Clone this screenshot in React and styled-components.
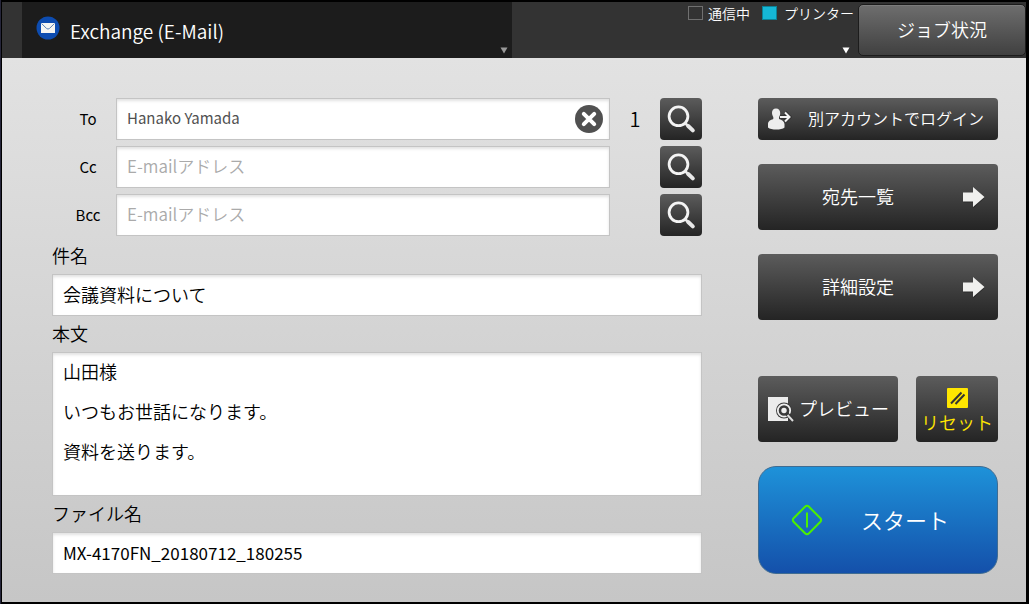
import React from "react";
import styled, { createGlobalStyle } from "styled-components";

const GlobalStyle = createGlobalStyle`
  *, *::before, *::after { box-sizing: border-box; }
  html, body, #root { height: 100%; }
  body {
    margin: 0;
    background: #000;
    font-family: "Noto Sans CJK JP", "Noto Sans", sans-serif;
    font-size: 18px;
    font-weight: 350;
    color: #000;
  }
  button, input, textarea { font: inherit; }
`;

const Screen = styled.div`
  min-height: 100%;
  display: flex;
  flex-direction: column;
  padding: 2px 3px 2px 1px;
  background: #000;
  border-left: 1px solid #25253a;
`;

const Header = styled.header`
  display: flex;
  height: 56px;
  padding-left: 20px;
  background: #333;
`;

const TitleTab = styled.button`
  flex: 0 1 490px;
  display: flex;
  align-items: center;
  gap: 10px;
  padding: 0 4px 0 14px;
  border: 0;
  background: #1c1c1c;
  color: #fff;
  font-size: 19px;
  line-height: 28px;
  text-align: left;
  cursor: pointer;
`;

const TitleText = styled.span`
  flex: 1;
  padding-top: 2px;
`;

const BrandIcon = styled.svg`
  width: 24px;
  height: 24px;
  margin-bottom: 4px;
`;

const Caret = styled.svg`
  width: 8px;
  height: 7px;
  align-self: flex-end;
  margin-bottom: 4px;
  fill: ${(p) => p.$color};
`;

const Status = styled.div`
  flex: 1;
  display: flex;
  flex-direction: column;
  justify-content: space-between;
  padding: 1px 4px 2px 0;

  ${Caret} { margin: 0 4px 2px 0; }
`;

const Indicators = styled.div`
  display: flex;
  justify-content: flex-end;
  gap: 12px;
  color: #fff;
  font-size: 14px;
  line-height: 20px;
  white-space: nowrap;
`;

const Indicator = styled.span`
  display: flex;
  gap: ${(p) => p.$gap}px;

  &::before {
    content: "";
    width: 15px;
    height: 14px;
    margin-top: 3px;
    border: 1px solid ${(p) => (p.$on ? "#0c8196" : "#707070")};
    background: ${(p) => (p.$on ? "#15b7d6" : "transparent")};
  }
`;

const JobButton = styled.button`
  width: 168px;
  margin: 2px 0;
  padding: 0 4px 2px;
  border: 1px solid #1c1c1c;
  border-radius: 5px;
  background: linear-gradient(#6e6e6e, #404040);
  box-shadow: inset 0 1px 0 #7c7c7c;
  color: #fff;
  cursor: pointer;
`;

const Main = styled.main`
  flex: 1;
  display: flex;
  align-items: flex-start;
  gap: 56px;
  padding: 40px 28px 28px 50px;
  background: linear-gradient(#e2e2e2, #c6c6c6);
`;

const Form = styled.form`
  flex: 1;
  min-width: 0;
  display: flex;
  flex-direction: column;
`;

const Recipients = styled.div`
  display: flex;
  flex-direction: column;
  gap: 6px;
  padding-bottom: 2px;
`;

const RecipientRow = styled.div`
  display: flex;
  align-items: center;
`;

const RecipientLabel = styled.label`
  width: 64px;
  padding: 0 0 2px 8px;
  font-size: 15px;
  font-weight: 400;
  text-align: center;
`;

const fieldFrame = `
  border: 1px solid #c4c4c4;
  background: #fff;
  box-shadow: inset 0 2px 3px #e2e2e2;
`;

const RecipientField = styled.div`
  ${fieldFrame}
  flex: 1;
  min-width: 0;
  height: 42px;
  display: flex;
  align-items: center;
  padding: 0 6px 0 10px;
`;

const RecipientInput = styled.input`
  flex: 1;
  min-width: 0;
  padding: 0 0 2px;
  border: 0;
  outline: 0;
  background: transparent;
  color: #505050;
  font-size: ${(p) => (p.defaultValue ? 15 : 17)}px;
  font-weight: 400;
  line-height: 24px;

  &::placeholder { color: #aaa; font-weight: 350; opacity: 1; }
`;

const ClearButton = styled.button`
  display: flex;
  padding: 0;
  border: 0;
  background: none;
  cursor: pointer;
`;

const Count = styled.output`
  width: 50px;
  padding-bottom: 2px;
  font-size: 20px;
  text-align: center;
`;

const SectionLabel = styled.label`
  height: 36px;
  line-height: 34px;
`;

const TextField = styled.input`
  ${fieldFrame}
  width: 100%;
  height: 42px;
  padding: 0 10px 2px;
  outline: 0;
  font-size: ${(p) => p.$size || 18}px;
  font-weight: ${(p) => p.$weight || 350};
`;

const MessageField = styled.textarea`
  ${fieldFrame}
  display: block;
  width: 100%;
  height: 144px;
  padding: 8px 10px;
  outline: 0;
  resize: none;
  overflow: hidden;
  line-height: 20px;
`;

const DarkButton = styled.button`
  display: flex;
  align-items: center;
  padding: 0;
  border: 0;
  border-radius: 4px;
  background: linear-gradient(#5c5c5c, #242424);
  color: #fff;
  white-space: nowrap;
  cursor: pointer;

  svg { flex: none; }
`;

const ButtonText = styled.span`
  padding-bottom: 3px;
`;

const SearchButton = styled(DarkButton)`
  width: 42px;
  height: 42px;
  justify-content: center;
`;

const Actions = styled.aside`
  width: 240px;
  display: flex;
  flex-direction: column;
  gap: 24px;
`;

const LoginButton = styled(DarkButton)`
  height: 42px;
  gap: 16px;
  padding-left: 8px;
  font-size: 16px;
`;

const NavButton = styled(DarkButton)`
  height: 66px;
  padding-right: 12px;

  ${ButtonText} { flex: 1; padding-right: 4px; }
`;

const ActionPair = styled.div`
  display: flex;
  gap: 18px;
  margin-top: 32px;
`;

const PreviewButton = styled(DarkButton)`
  width: 140px;
  height: 66px;
  gap: 4px;
  padding-left: 9px;
`;

const ResetButton = styled(DarkButton)`
  flex: 1;
  height: 66px;
  flex-direction: column;
  justify-content: center;
  gap: 2px;
  padding-top: 4px;
  color: #ffe600;
  line-height: 24px;
`;

const StartButton = styled.button`
  display: flex;
  align-items: center;
  gap: 38px;
  height: 108px;
  padding: 0 0 0 32px;
  border: 1px solid #3f6c92;
  border-radius: 18px;
  background: linear-gradient(#1e92d9, #1450aa);
  color: #fff;
  font-size: 22px;
  cursor: pointer;
`;

function MailIcon() {
  return (
    <BrandIcon viewBox="0 0 24 24" aria-hidden="true">
      <circle cx="12" cy="12" r="11.5" fill="#0d4cb0" />
      <rect x="5" y="7" width="14" height="10" fill="#f5f5f2" />
      <path d="M5.5 7.5 10.5 12.4Q12 13.8 13.5 12.4L18.5 7.5" fill="none" stroke="#5b82b8" strokeWidth="1" />
    </BrandIcon>
  );
}

function Triangle({ color }) {
  return (
    <Caret viewBox="0 0 8 7" $color={color} aria-hidden="true">
      <path d="M0.5 0.5H7.5L4 6.5Z" />
    </Caret>
  );
}

function SearchIcon() {
  return (
    <svg width="42" height="42" viewBox="0 0 42 42" fill="none" aria-hidden="true">
      <circle cx="18.5" cy="18.3" r="9.4" stroke="#f4f4f4" strokeWidth="2.8" />
      <path d="M25 25 28 28" stroke="#eee" strokeWidth="2.5" />
      <path d="M28.2 28 32.8 32.4" stroke="#e8e8e8" strokeWidth="4" strokeLinecap="round" />
    </svg>
  );
}

function ClearIcon() {
  return (
    <svg width="28" height="28" viewBox="0 0 28 28" aria-hidden="true">
      <circle cx="14" cy="14" r="14" fill="#505050" />
      <path d="M8.8 8.8 19.2 19.2M19.2 8.8 8.8 19.2" stroke="#fff" strokeWidth="4" strokeLinecap="round" />
    </svg>
  );
}

function AccountIcon() {
  return (
    <svg width="26" height="26" viewBox="0 0 26 26" aria-hidden="true">
      <path
        d="M10 2.5C7.4 2.5 5.9 4.4 6 7C6.1 8.8 6.7 10 7.3 10.9V13C4.4 14 2 15.2 2 18V21.5C5 24.3 15.5 24.3 18.5 21.5V18C18.3 15.2 15.8 14 13 13V10.9C13.7 10 14.2 8.8 14.2 7C14.2 4.4 12.6 2.5 10 2.5Z"
        fill="#eee"
      />
      <path d="M14 11H22M19 6.5 23.5 11 19 15.5" fill="none" stroke="#333" strokeWidth="4" />
      <path d="M14 11H23M19 6.5 23.5 11 19 15.5" fill="none" stroke="#f2f2f2" strokeWidth="2" />
    </svg>
  );
}

function ArrowIcon() {
  return (
    <svg width="24" height="24" viewBox="0 0 24 24" aria-hidden="true">
      <path d="M1.5 8.5H11.5V3L22.5 13 11.5 23V17.5H1.5Z" fill="#1e1e1e" opacity=".6" />
      <path d="M1 7.5H11V2L22.5 12 11 22V16.5H1Z" fill="#f0f0ee" />
    </svg>
  );
}

function PreviewIcon() {
  return (
    <svg width="28" height="28" viewBox="0 0 28 28" fill="none" aria-hidden="true">
      <path d="M1 2H21V26H1Z" fill="#ececec" />
      <circle cx="17" cy="15.5" r="8" fill="#3a3a3a" />
      <circle cx="17" cy="15.5" r="6.2" stroke="#eee" strokeWidth="1.8" />
      <circle cx="17" cy="15.5" r="2.7" fill="#eee" />
      <path d="M20 19 26 25.5" stroke="#333" strokeWidth="4" />
      <path d="M20.5 20 26 26" stroke="#ddd" strokeWidth="2" />
    </svg>
  );
}

function ResetIcon() {
  return (
    <svg width="21" height="20" viewBox="0 0 21 20" aria-hidden="true">
      <rect width="21" height="20" rx="1" fill="#ffe600" />
      <path d="M4 15.5 14.5 4.5M8.5 16 17.5 6.5" stroke="#333" strokeWidth="2" />
    </svg>
  );
}

function StartIcon() {
  return (
    <svg width="32" height="32" viewBox="0 0 32 32" fill="none" stroke="#4cf000" strokeWidth="2" aria-hidden="true">
      <path d="M14 2.8Q16 .8 18 2.8L29.2 14Q31.2 16 29.2 18L18 29.2Q16 31.2 14 29.2L2.8 18Q.8 16 2.8 14Z" />
      <path d="M16 8.5V23.5" />
    </svg>
  );
}

function Recipient({ id, label, value, count }) {
  return (
    <RecipientRow>
      <RecipientLabel htmlFor={id}>{label}</RecipientLabel>
      <RecipientField>
        <RecipientInput id={id} defaultValue={value} placeholder="E-mailアドレス" />
        {value && (
          <ClearButton type="button" aria-label="クリア">
            <ClearIcon />
          </ClearButton>
        )}
      </RecipientField>
      <Count htmlFor={id}>{count}</Count>
      <SearchButton type="button" aria-label={`${label} 検索`}>
        <SearchIcon />
      </SearchButton>
    </RecipientRow>
  );
}

const message = "山田様\n\nいつもお世話になります。\n\n資料を送ります。";

export default function App() {
  return (
    <>
      <GlobalStyle />
      <Screen>
        <Header>
          <TitleTab type="button">
            <MailIcon />
            <TitleText>Exchange (E-Mail)</TitleText>
            <Triangle color="#999" />
          </TitleTab>
          <Status>
            <Indicators>
              <Indicator $gap={5}>通信中</Indicator>
              <Indicator $on $gap={7}>プリンター</Indicator>
            </Indicators>
            <Triangle color="#fff" />
          </Status>
          <JobButton type="button">ジョブ状況</JobButton>
        </Header>
        <Main>
          <Form onSubmit={(e) => e.preventDefault()}>
            <Recipients>
              <Recipient id="to" label="To" value="Hanako Yamada" count={1} />
              <Recipient id="cc" label="Cc" />
              <Recipient id="bcc" label="Bcc" />
            </Recipients>
            <SectionLabel htmlFor="subject">件名</SectionLabel>
            <TextField id="subject" defaultValue="会議資料について" />
            <SectionLabel htmlFor="body">本文</SectionLabel>
            <MessageField id="body" defaultValue={message} />
            <SectionLabel htmlFor="filename">ファイル名</SectionLabel>
            <TextField id="filename" $size={17} $weight={400} defaultValue="MX-4170FN_20180712_180255" />
          </Form>
          <Actions>
            <LoginButton type="button">
              <AccountIcon />
              <ButtonText>別アカウントでログイン</ButtonText>
            </LoginButton>
            <NavButton type="button">
              <ButtonText>宛先一覧</ButtonText>
              <ArrowIcon />
            </NavButton>
            <NavButton type="button">
              <ButtonText>詳細設定</ButtonText>
              <ArrowIcon />
            </NavButton>
            <ActionPair>
              <PreviewButton type="button">
                <PreviewIcon />
                <ButtonText>プレビュー</ButtonText>
              </PreviewButton>
              <ResetButton type="button">
                <ResetIcon />
                <span>リセット</span>
              </ResetButton>
            </ActionPair>
            <StartButton type="button">
              <StartIcon />
              <ButtonText>スタート</ButtonText>
            </StartButton>
          </Actions>
        </Main>
      </Screen>
    </>
  );
}
